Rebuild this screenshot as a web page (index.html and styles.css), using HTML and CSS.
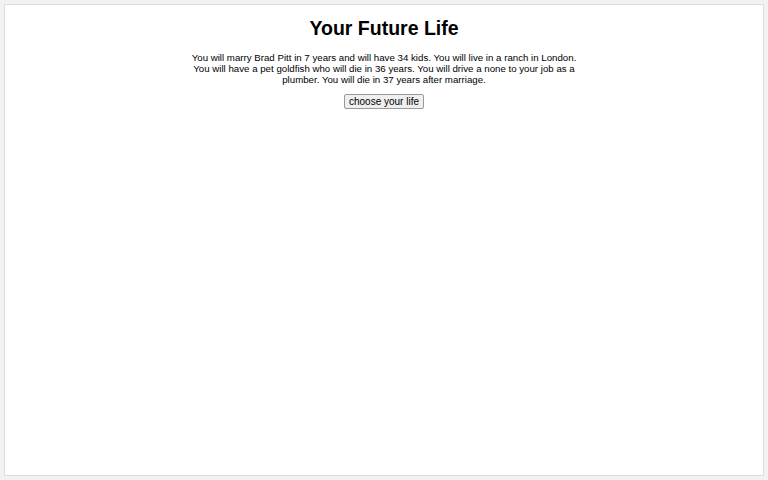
FILE: index.html
```html
<!DOCTYPE html>
<html lang="en">
<head>
    <meta charset="UTF-8">
    <title>Your Future Life</title>
    <link rel="stylesheet" href="styles.css">
</head>
<body>
    <div class="card">
        <h1>Your Future Life</h1>
        <p class="fortune" id="fortune">You will marry Brad Pitt in 7 years and will have 34 kids. You will live in a ranch in London. You will have a pet goldfish who will die in 36 years. You will drive a none to your job as a plumber. You will die in 37 years after marriage.</p>
        <button class="life-btn">choose your life</button>
    </div>
</body>
</html>
```

FILE: styles.css
```css
html, body {
    height: 100%;
}

body {
    margin: 0;
    padding: 4px;
    box-sizing: border-box;
    background: #f2f2f2;
    font-family: "Liberation Sans", Arial, sans-serif;
}

.card {
    height: 100%;
    box-sizing: border-box;
    background: white;
    border: 1px solid #dcdcdc;
    text-align: center;
    padding-top: 12px;
}

h1 {
    font-size: 19.5px;
    margin: 0 0 12px;
}

.fortune {
    font-size: 9.7px;
    line-height: 11px;
    max-width: 388px;
    margin: 0 auto 6px;
}

.life-btn {
    font-family: "Liberation Sans", Arial, sans-serif;
    font-size: 10px;
    padding: 1px 4px;
    background: #efefef;
    border: 1px solid #999;
    border-radius: 2px;
}
```
